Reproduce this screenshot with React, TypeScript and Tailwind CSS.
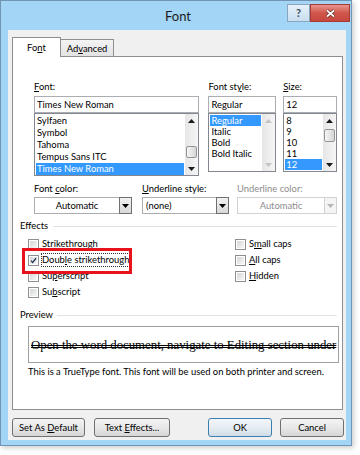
import React from 'react';

const ui = "font-['Lato','Liberation_Sans',sans-serif]";

function Acc({ children }: { children: React.ReactNode }) {
  return <span className="underline underline-offset-1">{children}</span>;
}

function Tri({ up, color = '#000' }: { up?: boolean; color?: string }) {
  return (
    <svg width="7" height="4" viewBox="0 0 7 4">
      <path d={up ? 'M0 4 L3.5 0 L7 4 Z' : 'M0 0 L7 0 L3.5 4 Z'} fill={color} />
    </svg>
  );
}

function ScrollBar({ thumb, disabled }: { thumb?: string; disabled?: boolean }) {
  const c = disabled ? '#c4c4c4' : '#1a1a1a';
  return (
    <div className="w-[13px] h-full flex flex-col bg-gradient-to-r from-[#e6e6e6] to-[#f6f6f6]">
      <div className="h-[13px] flex items-center justify-center">
        <Tri up color={c} />
      </div>
      <div className="flex-1">
        {thumb && (
          <div
            className={`${thumb} mx-[1px] rounded-[2px] border border-[#959595] bg-gradient-to-r from-[#f5f5f5] to-[#d6d6d6]`}
          />
        )}
      </div>
      <div className="h-[13px] flex items-center justify-center">
        <Tri color={c} />
      </div>
    </div>
  );
}

interface ListProps {
  items: string[];
  selected: string;
  rowClass: string;
  boxClass: string;
  thumb?: string;
  disabled?: boolean;
}

function ListBox({ items, selected, rowClass, boxClass, thumb, disabled }: ListProps) {
  return (
    <div className={`${boxClass} flex border border-[#828790] bg-white`}>
      <div className="flex-1 pt-[1px] pr-[1px] overflow-hidden">
        {items.map((it) => (
          <div
            key={it}
            className={`${rowClass} ml-[1px] pl-[1px] whitespace-nowrap ${
              it === selected ? 'bg-[#3399ff] text-white' : ''
            }`}
          >
            {it}
          </div>
        ))}
      </div>
      <ScrollBar thumb={thumb} disabled={disabled} />
    </div>
  );
}

function Combo({
  width,
  text,
  center,
  disabled,
}: {
  width: string;
  text: string;
  center?: boolean;
  disabled?: boolean;
}) {
  return (
    <div
      className={`${width} h-[17px] flex border ${
        disabled ? 'border-[#d2d2d2] text-[#8d8d8d]' : 'border-[#abadb3]'
      } bg-white`}
    >
      <div className={`flex-1 flex items-center ${center ? 'justify-center' : 'pl-[3px]'}`}>
        <span>{text}</span>
      </div>
      <div
        className={`w-[13px] -my-px -mr-px flex items-center justify-center border ${
          disabled
            ? 'border-[#d2d2d2] bg-[#f4f4f4]'
            : 'border-[#707070] bg-gradient-to-b from-[#f2f2f2] to-[#d8d8d8]'
        }`}
      >
        <Tri color={disabled ? '#b5b5b5' : '#000'} />
      </div>
    </div>
  );
}

function Check({
  label,
  checked,
  focus,
}: {
  label: React.ReactNode;
  checked?: boolean;
  focus?: boolean;
}) {
  return (
    <div className="h-[16px] flex items-center">
      <div className="w-[11px] h-[11px] border border-[#8e8f8f] bg-white p-[1px]">
        <div className="w-full h-full bg-gradient-to-br from-[#d4d6d8] to-[#f8f8f8] flex items-center justify-center">
          {checked && (
            <svg width="9" height="9" viewBox="0 0 9 9">
              <path d="M1.2 4.6 L3.4 7 L7.8 1.6" fill="none" stroke="#22365a" strokeWidth="1.6" />
            </svg>
          )}
        </div>
      </div>
      <span className={`ml-[3px] ${focus ? 'outline-1 outline-dotted outline-[#333]' : ''}`}>{label}</span>
    </div>
  );
}

function Btn({ width, children, def }: { width: string; children: React.ReactNode; def?: boolean }) {
  return (
    <div
      className={`${width} h-[19px] flex items-center justify-center rounded-[3px] border ${
        def
          ? 'border-[#3c7fb1] bg-gradient-to-b from-[#f2f6f9] via-[#e6edf3] to-[#d3dde6]'
          : 'border-[#707070] bg-gradient-to-b from-[#f3f3f3] via-[#e8e8e8] to-[#d6d6d6]'
      }`}
    >
      <span>{children}</span>
    </div>
  );
}

export default function App() {
  return (
    <div className={`w-[360px] h-[455px] bg-white ${ui} text-[9.4px] leading-[12px] text-black`}>
      <div className="w-[352px] h-[446px] flex flex-col border border-[#7393b3] bg-[#a3d5f6] shadow-[2px_2px_5px_rgba(0,0,0,0.2)]">
        {/* title bar */}
        <div className="h-[29px] grid grid-cols-[1fr_auto_1fr]">
          <div />
          <div className="pt-[7px] ml-[4px] text-[13px] leading-[16px] text-[#1c1c1c]">Font</div>
          <div className="flex justify-end items-start pt-[3px] pr-[1px]">
            <div className="w-[23px] h-[18px] flex items-center justify-center border border-[#8aa6bf] bg-gradient-to-b from-[#e6f1f9] to-[#c9def0] text-[11px] font-bold text-[#3c4b5a]">
              ?
            </div>
            <div className="w-[40px] h-[18px] flex items-center justify-center border border-[#a73a33] bg-gradient-to-b from-[#e8958e] via-[#d0564c] to-[#c7473d]">
              <svg width="11" height="9" viewBox="0 0 11 9">
                <path d="M2 1.5 L9 7.5 M9 1.5 L2 7.5" stroke="#5a1e1a" strokeWidth="3.2" />
                <path d="M2 1.5 L9 7.5 M9 1.5 L2 7.5" stroke="#fff" strokeWidth="1.8" />
              </svg>
            </div>
          </div>
        </div>

        {/* client area */}
        <div className="h-[410px] ml-[7px] mr-[5px] bg-[#f0f0f0] pl-[4px] pr-[2px] pt-[7px] flex flex-col">
          {/* tabs */}
          <div className="h-[20px] -mb-px flex items-end">
            <div className="relative z-10 w-[49px] h-[20px] border border-b-0 border-[#8c8e94] bg-white flex items-center justify-center">
              <span>
                Fo<Acc>n</Acc>t
              </span>
            </div>
            <div className="w-[53px] h-[18px] border border-l-0 border-b-0 border-[#8c8e94] bg-gradient-to-b from-[#f4f4f4] to-[#e2e2e2] flex items-center justify-center">
              <span>
                Ad<Acc>v</Acc>anced
              </span>
            </div>
          </div>

          {/* panel */}
          <div className="h-[354px] mr-[1px] border border-[#8c8e94] bg-white pl-[7px] pr-[5px] pt-[24px] flex flex-col">
            <div className="ml-[14px] flex">
              <div className="w-[166px]">
                <div className="h-[12px] mb-[3px]">
                  <Acc>F</Acc>ont:
                </div>
                <div className="h-[17px] border border-[#abadb3] flex items-center pl-[2px]">
                  <span>Times New Roman</span>
                </div>
                <ListBox
                  items={['Sylfaen', 'Symbol', 'Tahoma', 'Tempus Sans ITC', 'Times New Roman']}
                  selected="Times New Roman"
                  rowClass="h-[12px] leading-[12px]"
                  boxClass="h-[63px]"
                  thumb="mt-[19px] h-[12px]"
                />
              </div>
              <div className="w-[68px] ml-[9px]">
                <div className="h-[12px] mb-[3px]">
                  Font st<Acc>y</Acc>le:
                </div>
                <div className="h-[17px] border border-[#abadb3] flex items-center pl-[2px]">
                  <span>Regular</span>
                </div>
                <ListBox
                  items={['Regular', 'Italic', 'Bold', 'Bold Italic']}
                  selected="Regular"
                  rowClass="h-[11px] leading-[11px]"
                  boxClass="h-[59px]"
                  disabled
                />
              </div>
              <div className="w-[54px] ml-[7px]">
                <div className="h-[12px] mb-[3px]">
                  <Acc>S</Acc>ize:
                </div>
                <div className="h-[17px] border border-[#abadb3] flex items-center pl-[2px]">
                  <span>12</span>
                </div>
                <ListBox
                  items={['8', '9', '10', '11', '12']}
                  selected="12"
                  rowClass="h-[11px] leading-[11px]"
                  boxClass="h-[59px]"
                  thumb="mt-[2px] h-[13px]"
                />
              </div>
            </div>

            {/* combos */}
            <div className="ml-[14px] mt-[7px] flex">
              <div>
                <div className="h-[12px] mb-[2px]">
                  Font <Acc>c</Acc>olor:
                </div>
                <Combo width="w-[98px]" text="Automatic" center />
              </div>
              <div className="ml-[10px]">
                <div className="h-[12px] mb-[2px]">
                  <Acc>U</Acc>nderline style:
                </div>
                <Combo width="w-[87px]" text="(none)" />
              </div>
              <div className="ml-[8px]">
                <div className="h-[12px] mb-[2px] text-[#8d8d8d]">Underline color:</div>
                <Combo width="w-[100px]" text="Automatic" center disabled />
              </div>
            </div>

            {/* effects */}
            <div className="mt-[6px] h-[12px] flex items-center">
              <span>Effects</span>
              <div className="ml-[5px] flex-1 h-px bg-[#dde3e8]" />
            </div>
            <div className="mt-[4px] ml-[8px] flex">
              <div className="w-[207px]">
                <Check label={<>Stri<Acc>k</Acc>ethrough</>} />
                <div className="relative">
                  <Check label={<>Doub<Acc>l</Acc>e strikethrough</>} checked focus />
                  <div className="absolute left-[-6px] top-[-4px] w-[110px] h-[26px] border-[3px] border-[#e8121c]" />
                </div>
                <Check label={<>Su<Acc>p</Acc>erscript</>} />
                <Check label={<>Su<Acc>b</Acc>script</>} />
              </div>
              <div>
                <Check label={<>S<Acc>m</Acc>all caps</>} />
                <Check label={<><Acc>A</Acc>ll caps</>} />
                <Check label={<><Acc>H</Acc>idden</>} />
              </div>
            </div>

            {/* preview */}
            <div className="mt-[9px] h-[12px] flex items-center">
              <span>Preview</span>
              <div className="ml-[4px] flex-1 h-px bg-[#dde3e8]" />
            </div>
            <div className="mt-[5px] ml-[8px] w-[311px] h-[37px] border border-[#a0a0a0] bg-white flex items-center overflow-hidden pl-[2px]">
              <span className="whitespace-nowrap font-['Liberation_Serif',serif] text-[12.8px] leading-[16px] line-through decoration-double">
                Open the word document, navigate to Editing section under
              </span>
            </div>
            <div className="mt-[3px] ml-[8px] h-[12px] whitespace-nowrap">
              This is a TrueType font. This font will be used on both printer and screen.
            </div>
          </div>

          {/* buttons */}
          <div className="mt-[8px] flex">
            <Btn width="w-[75px]">
              Set As <Acc>D</Acc>efault
            </Btn>
            <div className="ml-[9px]">
              <Btn width="w-[76px]">
                Text <Acc>E</Acc>ffects...
              </Btn>
            </div>
            <div className="ml-[38px]">
              <Btn width="w-[64px]" def>
                OK
              </Btn>
            </div>
            <div className="ml-[8px]">
              <Btn width="w-[64px]">Cancel</Btn>
            </div>
          </div>
        </div>
      </div>
    </div>
  );
}
